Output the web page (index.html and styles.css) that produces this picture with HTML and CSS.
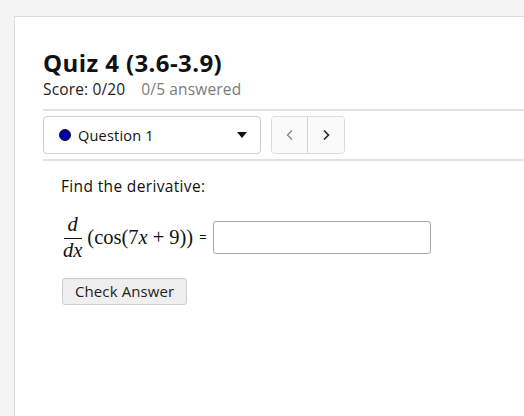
FILE: index.html
```html
<!DOCTYPE html>
<html>
<head>
<meta charset="utf-8">
<link rel="stylesheet" href="styles.css">
</head>
<body>
<div class="panel">
  <h1 class="title">Quiz 4 (3.6-3.9)</h1>
  <div class="score"><span>Score: 0/20</span><span class="answered">0/5 answered</span></div>
  <div class="toolbar">
    <div class="select">
      <span class="dot"></span>
      <span class="qlabel">Question 1</span>
      <span class="caret"></span>
    </div>
    <div class="navgroup">
      <button class="nav prev"><svg width="10" height="12" viewBox="0 0 10 12"><path d="M7 1.5 L2.5 6 L7 10.5" fill="none" stroke="#8a8a8a" stroke-width="1.4"/></svg></button>
      <button class="nav next"><svg width="10" height="12" viewBox="0 0 10 12"><path d="M3 1.5 L7.5 6 L3 10.5" fill="none" stroke="#222" stroke-width="1.6"/></svg></button>
    </div>
  </div>
  <div class="question">
    <p class="prompt">Find the derivative:</p>
    <div class="mathrow">
      <span class="math">
        <span class="frac"><span class="num">d</span><span class="den">dx</span></span><span class="expr">(cos(7<i>x</i><span class="op">+</span>9))</span>
      </span>
      <span class="eq">=</span>
      <input class="answer" type="text">
    </div>
    <button class="check">Check Answer</button>
  </div>
</div>
</body>
</html>
```
FILE: styles.css
```css
html, body {
  margin: 0;
  padding: 0;
}
body {
  background: #f4f4f4;
  font-family: "Open Sans", "DejaVu Sans", sans-serif;
  color: #111;
  overflow: hidden;
}
.panel {
  margin: 16px -20px 0 14px;
  background: #fff;
  border: 1px solid #dcdcdc;
  border-right: none;
  padding: 29px 0 0 28px;
  min-height: 420px;
}
.title {
  margin: 0;
  font-size: 24px;
  font-weight: bold;
  letter-spacing: 0.4px;
  line-height: 33px;
  color: #111;
}
.score {
  font-size: 15.5px;
  letter-spacing: 0.15px;
  line-height: 20px;
  color: #222;
  padding-bottom: 10px;
  border-bottom: 2px solid #e2e2e2;
}
.answered {
  color: #7b7b7b;
  margin-left: 16px;
}
.toolbar {
  display: flex;
  align-items: center;
  gap: 10px;
  padding: 5px 0 5px;
  border-bottom: 2px solid #e2e2e2;
}
.select {
  height: 36px;
  border: 1px solid #cfcfcf;
  border-radius: 4px;
  display: flex;
  align-items: center;
  padding: 0 0 0 15px;
  width: 201px;
}
.dot {
  width: 10px;
  height: 10px;
  border-radius: 50%;
  background: #0000a8;
  border: 1.5px solid #111;
  margin-right: 7px;
}
.qlabel {
  font-size: 14.5px;
  letter-spacing: 0.2px;
  color: #111;
  flex: 1;
}
.caret {
  width: 0;
  height: 0;
  border-left: 5px solid transparent;
  border-right: 5px solid transparent;
  border-top: 6px solid #111;
  margin-right: 13px;
}
.navgroup {
  display: flex;
  border: 1px solid #dcdcdc;
  border-radius: 4px;
  overflow: hidden;
}
.nav {
  width: 36px;
  height: 36px;
  background: #fafafa;
  border: none;
  padding: 0;
  display: flex;
  align-items: center;
  justify-content: center;
}
.nav.prev {
  border-right: 1px solid #d4d4d4;
}
.question {
  padding: 14px 0 0 18px;
}
.prompt {
  margin: 0;
  font-size: 15.5px;
  letter-spacing: 0.35px;
  line-height: 22px;
  color: #111;
}
.mathrow {
  display: flex;
  align-items: center;
  margin-top: 16px;
}
.math {
  font-family: "Liberation Serif", "Times New Roman", serif;
  font-size: 20.5px;
  display: inline-flex;
  align-items: center;
}
.frac {
  display: inline-flex;
  flex-direction: column;
  align-items: center;
  font-style: italic;
  margin-right: 3px;
}
.num {
  line-height: 22px;
  padding: 0 4px 3px;
  border-bottom: 1px solid #111;
}
.den {
  line-height: 22px;
  padding: 0 2px;
}
.expr i {
  font-style: italic;
}
.op {
  margin: 0 5px;
}
.eq {
  font-size: 13px;
  margin: 0 6px 0 6px;
}
.answer {
  box-sizing: border-box;
  width: 218px;
  height: 33px;
  border: 1px solid #a8a8a8;
  border-radius: 3px;
  padding: 0;
  margin: 0;
}
.check {
  display: block;
  margin-top: 17px;
  margin-left: 1px;
  font-family: "Open Sans", sans-serif;
  font-size: 15px;
  letter-spacing: 0.1px;
  color: #222;
  background: #efefef;
  border: 1px solid #cfcfcf;
  border-radius: 3px;
  padding: 2px 12px 3px;
}
```
